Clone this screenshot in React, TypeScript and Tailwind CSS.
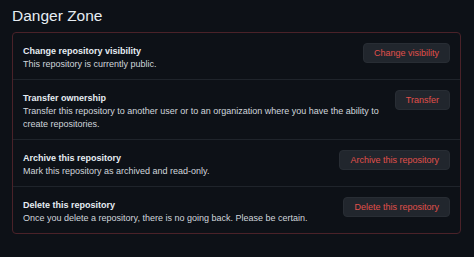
const rows = [
  {
    title: "Change repository visibility",
    desc: ["This repository is currently public."],
    action: "Change visibility",
  },
  {
    title: "Transfer ownership",
    desc: [
      "Transfer this repository to another user or to an organization where you have the ability to",
      "create repositories.",
    ],
    action: "Transfer",
  },
  {
    title: "Archive this repository",
    desc: ["Mark this repository as archived and read-only."],
    action: "Archive this repository",
  },
  {
    title: "Delete this repository",
    desc: ["Once you delete a repository, there is no going back. Please be certain."],
    action: "Delete this repository",
  },
];

export default function App() {
  return (
    <div className="h-[257px] w-[474px] bg-[#0d1117] px-[12px] pt-[6px] font-['Liberation_Sans',Arial,sans-serif] text-[#e6edf3]">
      <h2 className="mb-[6px] text-[15.5px] leading-[20px] font-normal">Danger Zone</h2>
      <div className="w-[449px] rounded-[4px] border border-[#4a2229]">
        {rows.map((r, i) => (
          <div
            key={r.title}
            className={`flex items-start gap-4 px-[10px] py-[10px] ${i > 0 ? "border-t border-[#1f242b]" : ""}`}
          >
            <div className="-mb-[2px] mt-[2px] min-w-0 flex-1 text-[9px] leading-[13px]">
              <div className="font-bold">{r.title}</div>
              <div className="text-[#d0d6dc]">
                {r.desc.map((d, j) => (
                  <div key={j} className="whitespace-nowrap">{d}</div>
                ))}
              </div>
            </div>
            <button className="h-[20px] shrink-0 rounded-[4px] border border-[#282d34] bg-[#21262d] px-[10px] text-[9px] leading-[18px] text-[#e0504b]">
              {r.action}
            </button>
          </div>
        ))}
      </div>
    </div>
  );
}
